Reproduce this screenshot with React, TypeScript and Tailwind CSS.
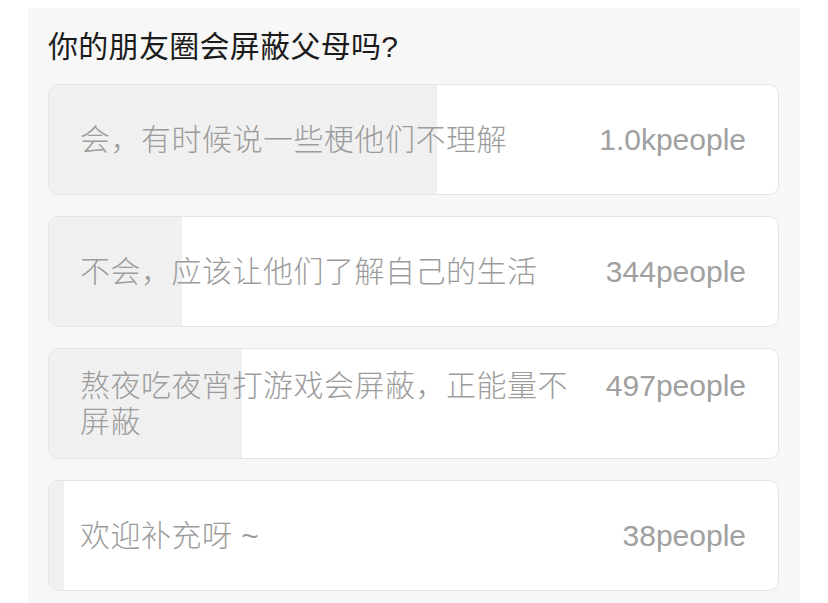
const options = [
  { text: "会，有时候说一些梗他们不理解", count: "1.0kpeople", votes: 1000 },
  { text: "不会，应该让他们了解自己的生活", count: "344people", votes: 344 },
  { text: "熬夜吃夜宵打游戏会屏蔽，正能量不屏蔽", count: "497people", votes: 497 },
  { text: "欢迎补充呀 ~", count: "38people", votes: 38 },
];

const total = options.reduce((s, o) => s + o.votes, 0);

const PollOption = ({ text, count, votes }: { text: string; count: string; votes: number }) => (
  <div className="relative flex min-h-[111px] items-center overflow-hidden rounded-[10px] border border-[#e4e4e4] bg-white">
    <div
      className="absolute inset-y-0 left-0 bg-[#f0f0f0]"
      style={{ width: `${(votes / total) * 100}%` }}
    />
    <div className="relative flex w-full items-start gap-6 pl-[31px] pr-[32px]">
      <p className="flex-1 text-[30px] font-light leading-[36px] tracking-[0.5px] text-[#9c9c9c]">{text}</p>
      <span className="shrink-0 text-[30px] leading-[36px] text-[#a0a0a0]">{count}</span>
    </div>
  </div>
);

export default function App() {
  return (
    <div
      className="h-[603px] overflow-hidden bg-white pl-[28px] pt-[8px]"
      style={{ fontFamily: '"Liberation Sans", "Noto Sans CJK SC", sans-serif' }}
    >
      <div className="h-full w-[772px] bg-[#f7f7f7] pl-[20px] pr-[21px] pt-[19px]">
        <h1 className="mb-[17px] text-[30px] leading-[40px] tracking-[0.3px] text-[#1c1c1c]">你的朋友圈会屏蔽父母吗?</h1>
        <div className="flex flex-col gap-[21px]">
          {options.map((o) => (
            <PollOption key={o.count} {...o} />
          ))}
        </div>
      </div>
    </div>
  );
}
